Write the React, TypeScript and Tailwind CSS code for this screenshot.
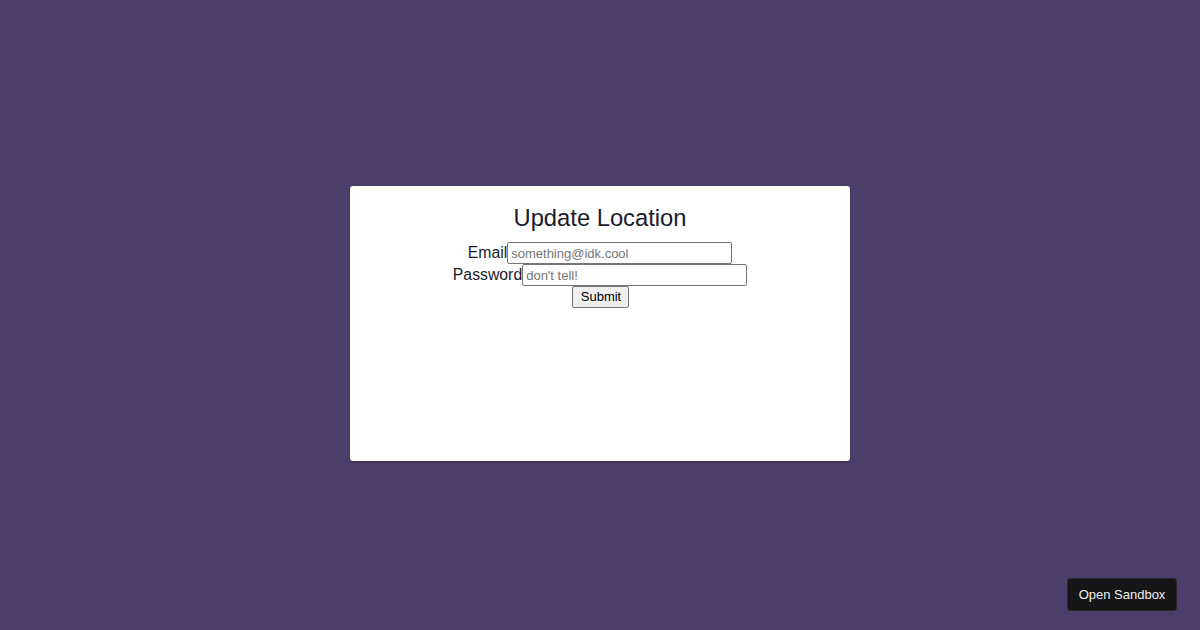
export default function App() {
  return (
    <div className="relative w-full h-[630px] bg-[#4b3e6a] flex flex-col items-center pt-[186px] font-['Liberation_Sans',Arial,sans-serif]">
      <div className="w-[500px] h-[275px] bg-white rounded-[3px] shadow-[0_1px_2px_rgba(0,0,0,0.35)] flex flex-col items-center pt-[18px] text-[#1a1a2e]">
        <h1 className="text-[23.75px] leading-[28px] mb-[10px]">Update Location</h1>
        <form className="flex flex-col items-center">
          <div className="flex items-center h-[22px]">
            <label className="text-[15.8px] leading-[22px]">Email</label>
            <input
              type="email"
              placeholder="something@idk.cool"
              className="w-[225px] h-[22px] border border-[#767676] rounded-[2px] px-[3px] text-[13px] text-black placeholder:text-[#757575] bg-white"
            />
          </div>
          <div className="flex items-center h-[22px]">
            <label className="text-[15.8px] leading-[22px]">Password</label>
            <input
              type="password"
              placeholder="don't tell!"
              className="w-[225px] h-[22px] border border-[#767676] rounded-[2px] px-[3px] text-[13px] text-black placeholder:text-[#757575] bg-white"
            />
          </div>
          <button
            type="button"
            className="ml-[2px] w-[57px] h-[22px] border border-[#767676] rounded-[2px] bg-[#efefef] text-[13px] text-black leading-none pb-[1px]"
          >
            Submit
          </button>
        </form>
      </div>
      <button className="absolute right-[23px] bottom-[19px] w-[110px] h-[33px] bg-[#151515] border border-[#2a2a2a] rounded-[3px] text-[13px] text-[#f0f0f0]">
        Open Sandbox
      </button>
    </div>
  );
}
